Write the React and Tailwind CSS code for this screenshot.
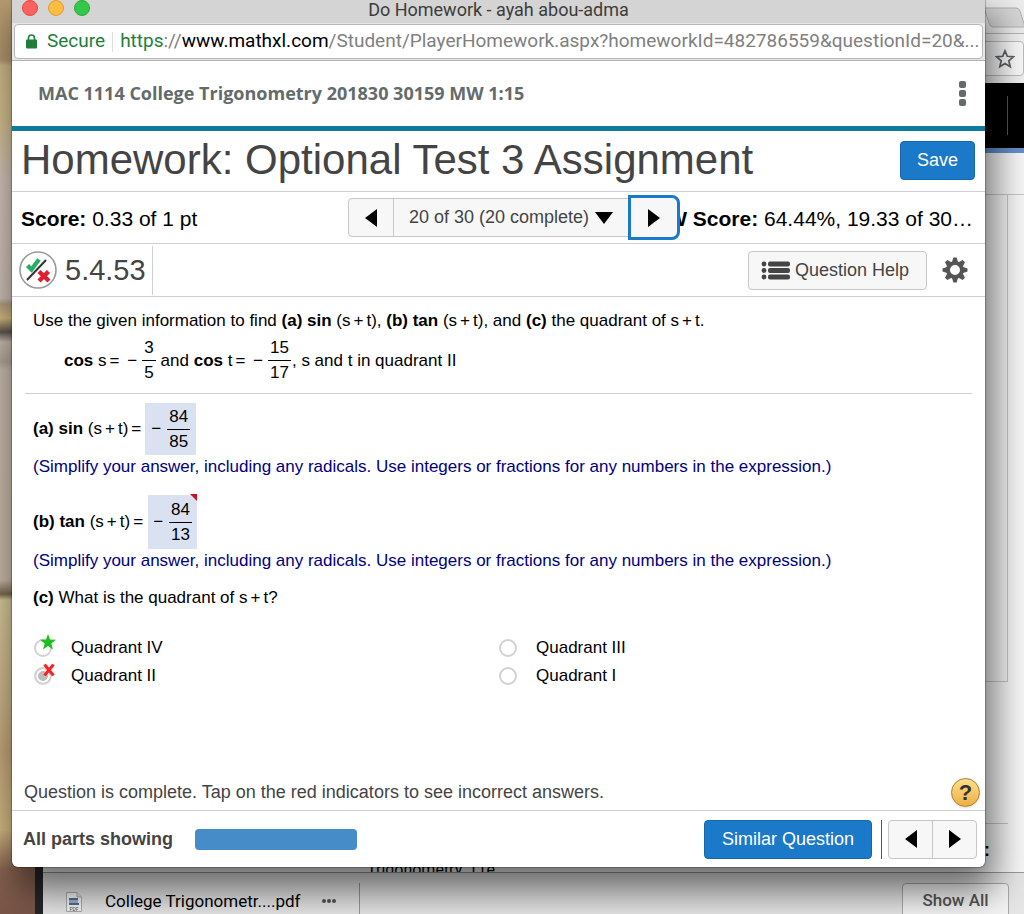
const sans = "font-['Liberation_Sans',Arial,sans-serif]";

function Arrow({ dir = "left" }) {
  const points = {
    left: "12,0 12,18 0,9",
    right: "0,0 0,18 12,9",
    down: "0,0 18,0 9,12",
  };
  return (
    <svg
      viewBox={dir === "down" ? "0 0 18 12" : "0 0 12 18"}
      className={dir === "down" ? "h-3 w-[18px]" : "h-[18px] w-3"}
      aria-hidden="true"
    >
      <polygon points={points[dir]} fill="#000" />
    </svg>
  );
}

function Fraction({ top, bottom }) {
  return (
    <span className="inline-flex flex-col items-center leading-5">
      <span className="border-b border-black px-[2px] pb-[2px]">{top}</span>
      <span className="pt-[2px]">{bottom}</span>
    </span>
  );
}

// operators sit closer to their operands than a full space
function Op({ children }) {
  return <span className="mx-[3px]">{children}</span>;
}

function Sum() {
  return (
    <>
      s<Op>+</Op>t
    </>
  );
}

function BackgroundBrowser() {
  return (
    <div className="absolute inset-y-0 right-0 left-[35px] flex flex-col border-l-8 border-[#26262a] bg-[#f4f4f4]">
      <div className="flex h-[34px] items-end justify-end border-b border-[#b5b5b5] bg-[#ececec]">
        <svg viewBox="0 0 40 34" className="h-[34px] w-10" aria-hidden="true">
          <path d="M0 9 H32 Q35 9 36 12 L41 28 H9 Q6 28 5 24 Z" fill="#d5d5d5" stroke="#b0b0b0" />
        </svg>
      </div>
      <div className="flex h-[49px] items-center justify-end bg-[#f1f1f1]">
        <div className="flex h-[35px] w-full items-center justify-end rounded-r border border-[#bdbdbd] bg-[#fafafa] pr-2">
          <svg viewBox="0 0 20 20" className="size-5" aria-hidden="true">
            <path
              d="M10 1.8 L12.3 7.3 L18.4 7.8 L13.8 11.8 L15.2 17.7 L10 14.5 L4.8 17.7 L6.2 11.8 L1.6 7.8 L7.7 7.3 Z"
              fill="none"
              stroke="#5f6368"
              strokeWidth="1.7"
            />
          </svg>
        </div>
      </div>
      <div className="flex h-[65px] justify-end bg-black py-[13px] pr-4">
        <div className="w-px bg-[#555]" />
      </div>
      <div className="h-[5px] bg-[#6390cc]" />
      <div className="flex grow flex-col bg-[#f8f8f8]">
        <div className="h-[42px] border-b border-[#c8c8c8]" />
        <div className="mr-4 h-[487px] border-r border-b border-[#c8c8c8]" />
        <div className="mr-4 h-[142px] border-b border-[#c8c8c8]" />
        <div className={`flex justify-end pt-3 pr-[34px] text-lg font-bold text-black ${sans}`}>:</div>
      </div>
      <div className="relative flex h-[42px] shrink-0 items-center border-t border-[#999] bg-[#e6e6e6] font-[Roboto,sans-serif] text-[17px] text-black">
        <div className="absolute -top-[15px] left-[324px] h-[14px] overflow-hidden text-base leading-6">
          Trigonometry, 11e
        </div>
        <svg viewBox="0 0 16 20" className="mt-4 ml-[23px] h-5 w-4" aria-hidden="true">
          <path d="M.5 .5 H11 L15.5 5 V19.5 H.5 Z" fill="#f5f5f5" stroke="#aaa" />
          <path d="M11 .5 V5 H15.5" fill="#ddd" stroke="#aaa" />
          <path d="M3 6 H12 V8 H3 Z M3 11 H13 V13 H3 Z" fill="#4e6e91" />
          <path d="M3 8 H12 V11 H3 Z" fill="#9fb3c9" />
          <text x="8" y="18.5" textAnchor="middle" fontSize="5" fill="#555">
            PDF
          </text>
        </svg>
        <span className="mt-4 ml-[23px]">College Trigonometr....pdf</span>
        <span className="mt-[14px] ml-[22px] flex gap-px">
          <i className="size-1 rounded-full bg-[#555]" />
          <i className="size-1 rounded-full bg-[#555]" />
          <i className="size-1 rounded-full bg-[#555]" />
        </span>
        <div className="mt-[10px] ml-[23px] h-8 w-px self-start bg-[#999]" />
        <button
          type="button"
          className="mt-[10px] mr-[15px] ml-auto h-9 w-[107px] self-start rounded-t border border-[#aaa] bg-[#f4f4f4] font-medium text-[#555]"
        >
          Show All
        </button>
      </div>
    </div>
  );
}

function TitleBar() {
  return (
    <div className="flex h-[23px] items-start bg-[#d4d4d4] pl-[10px] font-[Roboto,sans-serif]">
      <div className="flex gap-[10px]">
        <i className="size-4 rounded-full border border-[#e2483f] bg-[#fc615d]" />
        <i className="size-4 rounded-full border border-[#dfa035] bg-[#fdbc40]" />
        <i className="size-4 rounded-full border border-[#27aa35] bg-[#34c84a]" />
      </div>
      <div className="grow pr-[78px] text-center text-[18px] leading-5 text-[#3c3c3c]">
        Do Homework - ayah abou-adma
      </div>
    </div>
  );
}

function AddressBar() {
  return (
    <div className="h-[38px] border-b border-[#b4b4b4] bg-[#e6e6e6] px-[2px] pt-px">
      <div className="flex h-[35px] items-center rounded border border-[#b8b8b8] bg-white pl-[11px] font-[Roboto,sans-serif] text-[19px]">
        <svg viewBox="0 0 11 15" className="h-[15px] w-[11px] shrink-0" aria-hidden="true">
          <path d="M2.5 7 V4 a3 3 0 0 1 6 0 V7" fill="none" stroke="#1d7f3b" strokeWidth="1.6" />
          <rect y="5.5" width="11" height="9" rx="1" fill="#1d7f3b" />
        </svg>
        <span className="ml-[10px] text-[#1d7f3b]">Secure</span>
        <span className="mx-[7px] h-5 w-px shrink-0 bg-[#ddd]" />
        <span className="truncate text-[#808080]">
          <span className="text-[#1d7f3b]">https</span>://<span className="text-black">www.mathxl.com</span>
          /Student/PlayerHomework.aspx?homeworkId=482786559&questionId=20&...
        </span>
      </div>
    </div>
  );
}

function ScoreRow() {
  return (
    <div className="flex h-[52px] items-center border-b border-[#cdcfe0] text-[21px] text-black">
      <div className="w-[336px] shrink-0 pt-[2px] pl-[9px]">
        <b>Score:</b> 0.33 of 1 pt
      </div>
      <div className="relative z-10 flex shrink-0 items-center">
        <div className="flex h-[39px] rounded-l border border-[#c6c6c6] bg-[#f7f7f7]">
          <button
            type="button"
            aria-label="Previous question"
            className="flex w-[45px] items-center justify-center border-r border-[#c6c6c6]"
          >
            <Arrow />
          </button>
          <button
            type="button"
            className="flex w-[234px] items-center justify-center gap-[6px] text-[18px] whitespace-nowrap text-[#444]"
          >
            20 of 30 (20 complete)
            <Arrow dir="down" />
          </button>
        </div>
        <button
          type="button"
          aria-label="Next question"
          className="-ml-px flex h-[45px] w-[52px] items-center justify-center rounded-r-lg border-3 border-[#1b79c9] bg-[#f7f7f7]"
        >
          <Arrow dir="right" />
        </button>
      </div>
      <div className="flex min-w-0 grow justify-end pt-[2px] pr-3 whitespace-nowrap">
        <span>
          <b>HW Score:</b> 64.44%, 19.33 of 30…
        </span>
      </div>
    </div>
  );
}

function SectionRow() {
  return (
    <div className="flex h-[53px] items-center border-b border-[#cdcfe0] text-[#444]">
      <svg viewBox="0 0 38 38" className="ml-[7px] size-[38px]" aria-hidden="true">
        <circle cx="19" cy="19" r="18" fill="#fff" stroke="#999" strokeWidth="1.6" />
        <path d="M8.500 14.500 L12.500 18.500 L20 8.500" fill="none" stroke="#27ae60" strokeWidth="4.400" />
        <path d="M8 29 L27 9" stroke="#333" strokeWidth="2" />
        <path d="M20 20.500 L30 30 M29.500 20.500 L20 30" stroke="#df1f30" strokeWidth="4.400" />
      </svg>
      <div className="flex h-[49px] w-[96px] items-center border-r border-[#cdcfe0] pt-[2px] pl-2 text-[29px]">
        5.4.53
      </div>
      <button
        type="button"
        className="ml-auto flex h-[39px] w-[179px] items-center gap-[5px] rounded border border-[#c6c6c6] bg-[#f7f7f7] px-3 text-[18px]"
      >
        <svg viewBox="0 0 29 19" className="h-[19px] w-[29px]" fill="#444" aria-hidden="true">
          <circle cx="3" cy="3" r="2.4" />
          <circle cx="3" cy="9.5" r="2.4" />
          <circle cx="3" cy="16" r="2.4" />
          <rect x="7" y=".5" width="22" height="5" rx="2" />
          <rect x="7" y="7" width="22" height="5" rx="2" />
          <rect x="7" y="13.5" width="22" height="5" rx="2" />
        </svg>
        Question Help
      </button>
      <button type="button" aria-label="Settings" className="mr-[17px] ml-[15px]">
        <svg viewBox="-13 -13 26 26" className="size-[26px]" fill="#555" aria-hidden="true">
          {[0, 45, 90, 135, 180, 225, 270, 315].map((a) => (
            <path key={a} d="M-3 -8 L-1.6 -12.5 H1.6 L3 -8 Z" transform={`rotate(${a})`} />
          ))}
          <circle r="7" fill="none" stroke="#555" strokeWidth="4" />
        </svg>
      </button>
    </div>
  );
}

function Choice({ label, mark, checked = false }) {
  return (
    <label className="flex h-7 items-center gap-[19px]">
      <span className="relative flex size-[18px]">
        <input
          type="radio"
          name="quadrant"
          defaultChecked={checked}
          className="size-[18px] appearance-none rounded-full border-2 border-[#d2d2d2] bg-white checked:bg-[#bdbdbd] checked:shadow-[inset_0_0_0_2px_white]"
        />
        {mark === "star" && (
          <svg viewBox="0 0 16 16" className="absolute -top-[5px] left-[6px] size-4" aria-hidden="true">
            <path d="M8 0 L10 5.6 L16 5.8 L11.3 9.4 L13 15.4 L8 12 L3 15.4 L4.7 9.4 L0 5.8 L6 5.6 Z" fill="#1fbe1f" />
          </svg>
        )}
        {mark === "cross" && (
          <svg viewBox="0 0 12 12" className="absolute -top-[3px] left-[9px] size-3" aria-hidden="true">
            <path d="M1.500 .5 L10.500 11.500 M10.500 .5 L1.500 11.500" stroke="#fb2222" strokeWidth="3" />
          </svg>
        )}
      </span>
      {label}
    </label>
  );
}

function Question() {
  const hint =
    "(Simplify your answer, including any radicals. Use integers or fractions for any numbers in the expression.)";
  return (
    <div className="px-[13px] text-[17px] leading-5 text-black">
      <div className="border-b border-[#cdcfe0] px-2 pt-[14px] pb-[10px]">
        <p>
          Use the given information to find <b>(a) sin</b> (<Sum />), <b>(b) tan</b> (<Sum />), and <b>(c)</b> the
          quadrant of <Sum />.
        </p>
        <div className="mt-[7px] flex items-center gap-[5px] pl-[31px]">
          <span>
            <b>cos</b> s<Op>=</Op> −
          </span>
          <Fraction top="3" bottom="5" />
          <span>
            and <b>cos</b> t<Op>=</Op> −
          </span>
          <span className="flex items-center">
            <Fraction top="15" bottom="17" />
            <span className="ml-px">, s and t in quadrant II</span>
          </span>
        </div>
      </div>
      <div className="px-2 pt-[9px]">
        <div className="flex items-center gap-px">
          <span>
            <b>(a) sin</b> (<Sum />)<Op>=</Op>
          </span>
          <span className="flex h-[52px] w-[51px] items-center justify-center gap-[6px] bg-[#dae2f2]">
            − <Fraction top="84" bottom="85" />
          </span>
        </div>
        <p className="mt-[2px] text-[#000080]">{hint}</p>
        <div className="mt-[18px] flex items-center gap-[2px]">
          <span>
            <b>(b) tan</b> (<Sum />)<Op>=</Op>
          </span>
          <span className="relative flex h-[54px] w-[49px] items-center justify-center gap-[6px] bg-[#dae2f2]">
            − <Fraction top="84" bottom="13" />
            <svg viewBox="0 0 7 7" className="absolute -top-px right-0 size-[7px]" aria-hidden="true">
              <path d="M0 0 H7 V7 Z" fill="#c4161c" />
            </svg>
          </span>
        </div>
        <p className="mt-[2px] text-[#000080]">{hint}</p>
        <p className="mt-[17px]">
          <b>(c)</b> What is the quadrant of <Sum />?
        </p>
        <div className="mt-[26px] grid grid-cols-2 pl-px">
          <Choice label="Quadrant IV" mark="star" />
          <Choice label="Quadrant III" />
          <Choice label="Quadrant II" mark="cross" checked />
          <Choice label="Quadrant I" />
        </div>
      </div>
    </div>
  );
}

function Footer() {
  return (
    <footer className="flex h-[57px] items-center border-t border-[#cdcfe0] pl-[11px]">
      <b className="text-[18px] text-[#444]">All parts showing</b>
      <div className="ml-[22px] h-[21px] w-[162px] rounded bg-[#468cc8]" />
      <button
        type="button"
        className="ml-auto h-[39px] w-[168px] rounded border border-[#1468ae] bg-[#1b79c9] text-[18px] text-white"
      >
        Similar Question
      </button>
      <div className="mr-[6px] ml-[9px] h-[39px] w-px bg-[#555]" />
      <div className="mr-2 flex h-[39px] w-[89px] rounded border border-[#c6c6c6] bg-[#f7f7f7]">
        <button
          type="button"
          aria-label="Previous"
          className="flex flex-1 items-center justify-center border-r border-[#c6c6c6]"
        >
          <Arrow />
        </button>
        <button type="button" aria-label="Next" className="flex flex-1 items-center justify-center">
          <Arrow dir="right" />
        </button>
      </div>
    </footer>
  );
}

export default function App() {
  return (
    <div className="relative flex min-h-screen overflow-hidden bg-[linear-gradient(180deg,#b89c72_0,#b39870_60px,#d2bb8c_66px,#d4c08f_120px,#d3c4bb_180px,#cdc0b6_298px,#b49e84_304px,#d6bd80_318px,#5d5450_332px,#c8bdb0_342px,#b4a698_362px,#c9bcae_370px,#c9bba9_580px,#7a6a50_594px,#d8ca9c_600px,#cdb68a_700px,#c6a87c_750px,#d6bb86_830px,#8c6654_870px,#7a5548_100%)] pr-[39px] pb-[47px] pl-3">
      <BackgroundBrowser />
      <main
        className={`relative flex min-w-0 grow flex-col rounded-b-md bg-white shadow-[0_0_1px_1px_rgba(0,0,0,0.25),6px_20px_36px_4px_rgba(0,0,0,0.55)] ${sans}`}
      >
        <TitleBar />
        <AddressBar />
        <header className="flex h-[70px] items-center justify-between border-b-5 border-[#0f7c9c] pr-[19px] pl-[26px]">
          <b className="font-['Open_Sans',sans-serif] text-[18px] text-[#636b6b]">
            MAC 1114 College Trigonometry 201830 30159 MW 1:15
          </b>
          <button type="button" aria-label="Menu" className="flex flex-col gap-[2px]">
            <i className="size-[7px] rounded-xs bg-[#636b6b]" />
            <i className="size-[7px] rounded-xs bg-[#636b6b]" />
            <i className="size-[7px] rounded-xs bg-[#636b6b]" />
          </button>
        </header>
        <div className="flex h-[61px] items-center justify-between border-b border-[#cdcfe0] pr-[10px] pb-[2px] pl-[9px]">
          <h1 className="text-[42px] leading-[56px] whitespace-nowrap text-[#444]">
            Homework: Optional Test 3 Assignment
          </h1>
          <button
            type="button"
            className="h-[39px] w-[75px] rounded border border-[#1468ae] bg-[#1b79c9] text-[18px] text-white"
          >
            Save
          </button>
        </div>
        <ScoreRow />
        <SectionRow />
        <Question />
        <div className="mt-auto flex items-center justify-between pr-[5px] pb-[3px] pl-3 text-[18px] text-[#444]">
          <p>Question is complete. Tap on the red indicators to see incorrect answers.</p>
          <button
            type="button"
            aria-label="Help"
            className="size-[29px] rounded-full border border-[#a88130] bg-linear-to-b from-[#fbe08a] to-[#f0ae40] text-[22px] leading-6 font-bold text-[#333] shadow"
          >
            ?
          </button>
        </div>
        <Footer />
      </main>
    </div>
  );
}
